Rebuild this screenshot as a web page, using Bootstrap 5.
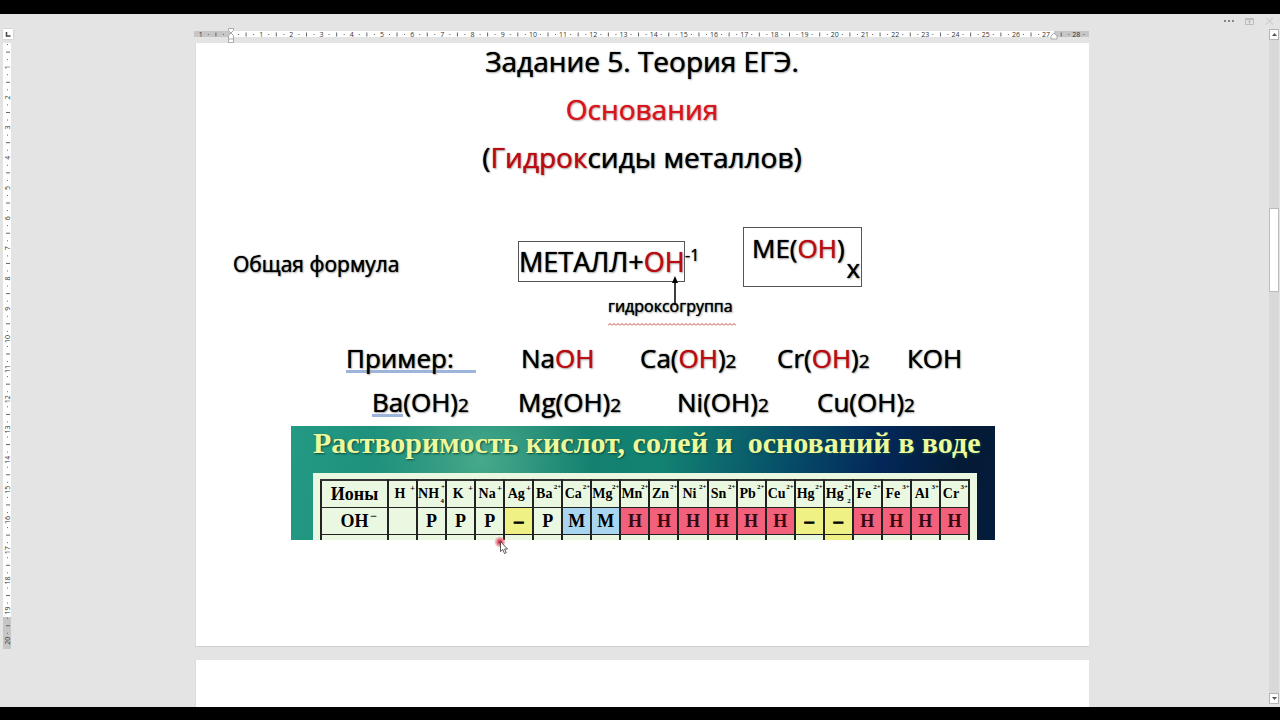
<!DOCTYPE html>
<html lang="ru">
<head>
<meta charset="utf-8">
<meta name="viewport" content="width=device-width, initial-scale=1">
<title>Задание 5. Теория ЕГЭ. Основания</title>
<link href="https://cdn.jsdelivr.net/npm/bootstrap@5.3.0/dist/css/bootstrap.min.css" rel="stylesheet">
<style>
  body { background: #000; padding: 14px 0 13px; font-family: "Open Sans", "Noto Sans", sans-serif; color: #000; }
  .word-app { background: #e4e4e4; }
  .title-tools { height: 14px; gap: 9px; padding-right: 5px; }
  .tool-btn { border: 0; background: none; padding: 0; width: 11px; height: 14px; line-height: 0; }
  .tool-btn svg, .sb-btn svg { display: block; margin: auto; }
  .left-rail { width: 15px; padding-left: 3px; }
  .tab-pick { width: 10px; height: 10px; margin: 1px 0 4px; border: 0; padding: 0; background: #fff; box-shadow: 0 0 2px #bbb; line-height: 0; }
  .doc-col { max-width: 894px; }
  .ruler-top { height: 15px; }
  .ruler-top svg, .left-rail svg { display: block; overflow: visible; }
  svg text { font: 7px "Open Sans", sans-serif; fill: #333; text-anchor: middle; }
  .sheets { overflow: clip; }
  .sheet { background: #fff; box-shadow: inset 1px 0 0 #dcdcdc, 0 1px 0 #cfcfcf; }
  .sheet-first { padding-bottom: 106px; margin-bottom: 14px; }
  .hand { text-shadow: 0 0 1px currentColor, 1px 1px 2px #aaa; font-size: 28px; line-height: 48px; }
  .hand h1, .hand h2, .hand h3 { font-size: 28px; font-weight: 400; line-height: 48px; margin: 0; }
  .hand h1 { line-height: 36px; margin-bottom: 6px; }
  .red-bright { color: #d8141c; }
  .red-dark { color: #b90c12; text-shadow: 0 0 1px currentColor, 1px 1px 2px #aaa; }
  .formula { padding: 46px 0 0 38px; grid-template-columns: 285px 225px 119px; line-height: 40px; font-size: 26px; }
  .formula-label { font-size: 21px; margin-top: 17px; }
  .frame { border: 1px solid #555; }
  .frame-metal { width: 167px; height: 41px; margin-top: 14px; line-height: 40px; font-size: 27px; }
  .frame-me { height: 60px; padding-left: 8px; line-height: 40px; }
  .sup-one { font-size: 16px; line-height: 20px; margin-top: 18px; }
  .sub-x { right: 1px; bottom: 0; line-height: 36px; }
  .hydroxo { padding-left: 413px; height: 39px; line-height: 39px; font-size: 16px; }
  .hydroxo span { display: inline-block; position: relative; }
  .arrow-up { position: absolute; left: 62px; top: -11px; }
  .wave { display: block; width: 128px; height: 3px; position: absolute; left: 0; bottom: 0; }
  .examples { font-size: 26px; line-height: 44px; }
  .examples sub { font-size: 19px; line-height: 1; vertical-align: baseline; position: static; }
  .ex-a { padding: 10px 0 0 151px; grid-template-columns: 175px 119px 137px 130px auto; }
  .ex-b { padding-left: 177px; grid-template-columns: 146px 159px 140px auto; }
  .blue-line { background: linear-gradient(#9db4dc, #9db4dc) 0 34px / 100% 3px no-repeat; display: inline-block; }
  .blue-wide { width: 130px; }
  .chart { margin: 2px 94px 0 96px; padding: 0 18px 0 22px; background: radial-gradient(circle at 190px 35px, #46a98a 0, rgba(50,160,130,0) 110px), linear-gradient(100deg, #239a84 0, #16806f 35%, #128272 52%, #064b68 70%, #03285a 82%, #041a35 94%, #041c3c 100%); }
  .chart-title { font: bold 30px/34px "Liberation Serif", serif; color: #eef99b; text-shadow: 1px 1px 2px #0a4a40; height: 47px; margin: 0; white-space: pre; }
  .chart-body { background: #eaf8e2; padding: 6px 7px 0; }
  .ions { width: 100%; table-layout: fixed; border-collapse: collapse; font: bold 18px/20px "Liberation Serif", serif; text-align: center; }
  .ions th, .ions td { border: 1px solid #222; border-width: 1px 2px 1px 1px; padding: 0; position: relative; height: 27px; font-weight: bold; text-align: center; white-space: nowrap; }
  .ions thead th { border-top: 2px solid #333; font-size: 14px; }
  .ions tbody tr:last-child td { height: 6px; border-bottom: 0; }
  .ions thead .first-col, .ions .first-col { width: 67px; font-size: 18px; border-left: 2px solid #222; }
  .ions sup { font-size: 7px; line-height: 8px; position: absolute; right: 0; top: 2px; }
  .ions .one sup { font-size: 9px; right: 1px; top: 3px; }
  .ions .first-col sup { right: 10px; top: 4px; font-size: 12px; }
  .ions sub { font-size: 7px; line-height: 8px; position: absolute; right: 1px; bottom: 2px; }
  .ions .one { padding-right: 5px; }
  .ions .two { padding-right: 7px; }
  .ions .no { background: #f2607c; color: #35080f; }
  .ions .lo { background: #a8d6f1; }
  .ions .dash { background: #f0f184; -webkit-text-stroke: 1px; }
  .pointer { position: absolute; left: 202px; bottom: -15px; }
  .scroll-col { width: 11px; padding: 1px 1px 3px 0; }
  .track { background: #d9d9d9; padding-top: 168px; }
  .thumb { height: 84px; background: #fff; border: 1px solid #bbb; }
  .sb-btn { height: 11px; padding: 0; background: #fff; border: 1px solid #b5b5b5; line-height: 0; }
</style>
</head>
<body class="vh-100 d-flex flex-column overflow-hidden">
<div class="word-app flex-fill d-flex flex-column overflow-hidden">
  <header class="title-tools d-flex justify-content-end flex-shrink-0">
    <button class="tool-btn" aria-label="Ещё"><svg width="11" height="14"><path d="M0 7h2M4 7h2M8 7h2" stroke="#666" stroke-width="1.5"/></svg></button>
    <button class="tool-btn" aria-label="Параметры ленты"><svg width="9" height="14" fill="none" stroke="#bdbdbd"><path d="M.5 4.500h8v6h-8zM.5 5.500h8M4.500 10V6.500M3 8l1.500-1.500L6 8"/></svg></button>
    <button class="tool-btn" aria-label="Закрыть"><svg width="9" height="14" stroke="#c2c2c2"><path d="M1 3.500l7 7M8 3.500l-7 7"/></svg></button>
  </header>
  <div class="d-flex flex-fill overflow-hidden">
    <aside class="left-rail flex-shrink-0">
      <button class="tab-pick d-block" aria-label="Табуляция"><svg width="10" height="10" fill="none" stroke="#444" stroke-width="1.500"><path d="M3.500 3v4h4"/></svg></button>
      <svg id="rulerV" width="8" height="607"></svg>
    </aside>
    <main class="doc-col flex-fill mx-auto d-flex flex-column">
      <div class="ruler-top flex-shrink-0"><svg id="rulerH" width="100%" height="15" viewBox="0 0 894 15"></svg></div>
      <div class="sheets flex-fill d-flex flex-column">
      <article class="sheet sheet-first flex-shrink-0">
        <div class="hand">
          <div class="text-center">
            <h1>Задание 5. Теория ЕГЭ.</h1>
            <h2 class="red-bright">Основания</h2>
            <h3>(<span class="red-dark">Гидрок</span>сиды металлов)</h3>
          </div>
          <div class="formula d-grid">
            <div class="formula-label">Общая формула</div>
            <div class="d-flex">
              <div class="frame frame-metal text-nowrap">МЕТАЛЛ+<span class="red-dark">ОН</span></div>
              <div class="sup-one">-1</div>
            </div>
            <div class="frame frame-me position-relative">МЕ(<span class="red-dark">ОН</span>)<span class="sub-x position-absolute">х</span></div>
          </div>
          <div class="hydroxo"><span>гидроксогруппа
            <svg class="arrow-up" width="10" height="30"><path d="M5 29V5" stroke="#000" stroke-width="1.500"/><path d="M5 0l3 7H2z"/></svg>
            <svg class="wave" fill="none" stroke="#c8463c"><defs><pattern id="wv" width="4" height="3" patternUnits="userSpaceOnUse"><path d="M0 2.500L2 .5l2 2"/></pattern></defs><rect width="128" height="3" fill="url(#wv)" stroke="none"/></svg>
          </span></div>
          <div class="examples">
            <div class="ex-a d-grid">
              <div><span class="blue-line blue-wide">Пример:</span></div>
              <div>Na<span class="red-dark">OH</span></div>
              <div>Ca(<span class="red-dark">OH</span>)<sub>2</sub></div>
              <div>Cr(<span class="red-dark">OH</span>)<sub>2</sub></div>
              <div>КОН</div>
            </div>
            <div class="ex-b d-grid">
              <div><span class="blue-line">Ba</span>(OH)<sub>2</sub></div>
              <div>Mg(OH)<sub>2</sub></div>
              <div>Ni(OH)<sub>2</sub></div>
              <div>Cu(OH)<sub>2</sub></div>
            </div>
          </div>
        </div>
        <section class="chart position-relative">
          <h4 class="chart-title">Растворимость кислот, солей и  оснований в воде</h4>
          <div class="chart-body">
            <table class="ions">
              <thead><tr><th class="first-col">Ионы</th><th class="one">H<sup>+</sup></th><th class="two">NH<sup>+</sup><sub>4</sub></th><th class="one">K<sup>+</sup></th><th class="one">Na<sup>+</sup></th><th class="one">Ag<sup>+</sup></th><th class="two">Ba<sup>2+</sup></th><th class="two">Ca<sup>2+</sup></th><th class="two">Mg<sup>2+</sup></th><th class="two">Mn<sup>2+</sup></th><th class="two">Zn<sup>2+</sup></th><th class="two">Ni<sup>2+</sup></th><th class="two">Sn<sup>2+</sup></th><th class="two">Pb<sup>2+</sup></th><th class="two">Cu<sup>2+</sup></th><th class="two">Hg<sup>2+</sup></th><th class="two">Hg<sup>2+</sup><sub>2</sub></th><th class="two">Fe<sup>2+</sup></th><th class="two">Fe<sup>3+</sup></th><th class="two">Al<sup>3+</sup></th><th class="two">Cr<sup>3+</sup></th></tr></thead>
              <tbody>
                <tr><th class="first-col">OH<sup>−</sup></th><td></td><td>Р</td><td>Р</td><td>Р</td><td class="dash">–</td><td>Р</td><td class="lo">М</td><td class="lo">М</td><td class="no">Н</td><td class="no">Н</td><td class="no">Н</td><td class="no">Н</td><td class="no">Н</td><td class="no">Н</td><td class="dash">–</td><td class="dash">–</td><td class="no">Н</td><td class="no">Н</td><td class="no">Н</td><td class="no">Н</td></tr>
                <tr><td class="first-col"></td><td></td><td></td><td></td><td></td><td></td><td></td><td></td><td></td><td></td><td></td><td></td><td></td><td></td><td></td><td></td><td class="dash"></td><td></td><td></td><td></td><td></td></tr>
              </tbody>
            </table>
          </div>
          <svg class="pointer" width="20" height="22"><defs><radialGradient id="spot"><stop offset=".2" stop-color="#d8283c"/><stop offset="1" stop-color="#f0607a" stop-opacity=".2"/></radialGradient></defs><circle cx="7" cy="9" r="5.500" fill="url(#spot)"/><path d="M7.500 8.500v10l2.300-2 1.700 4 1.800-.8-1.700-3.700h2.900z" fill="#fff" stroke="#333" stroke-width=".8"/></svg>
        </section>
      </article>
      <article class="sheet flex-fill"></article>
      </div>
    </main>
    <aside class="scroll-col d-flex flex-column flex-shrink-0">
      <button class="sb-btn" aria-label="Вверх"><svg width="7" height="5"><path d="M1 4l2.500-3L6 4z" fill="#555"/></svg></button>
      <div class="track flex-fill"><div class="thumb"></div></div>
      <button class="sb-btn" aria-label="Вниз"><svg width="7" height="5"><path d="M1 1l2.500 3L6 1z" fill="#555"/></svg></button>
    </aside>
  </div>
</div>
<script src="https://cdn.jsdelivr.net/npm/bootstrap@5.3.0/dist/js/bootstrap.bundle.min.js"></script>
<script>
  const CM = 30.19;
  // Quarter-centimetre marks: a number on each whole, a tick on the half, dots between.
  function marks(from, to, zero, place) {
    let out = '';
    for (let q = from; q <= to; q++) {
      if (q === 0) continue;
      const p = zero + q * CM / 4;
      out += place(p, q % 4 === 0 ? Math.abs(q / 4) : '', q % 2 === 0);
    }
    return out;
  }
  document.getElementById('rulerH').innerHTML =
    '<rect x="-1" y="3" width="895" height="6" fill="#fff"/><rect x="-1" y="3" width="37" height="6" fill="#c6c6c6"/><rect x="859" y="3" width="35" height="6" fill="#c6c6c6"/>' +
    marks(-4, 113, 36, (p, n, half) => n !== '' ? `<text x="${p}" y="9">${n}</text>` :
      `<path d="M${p} ${half ? 4.5 : 6}v${half ? 4 : 1}" stroke="#666"/>`) +
    '<path d="M33.500 .5h5v2l-5 5v7h5v-7l-5-5zM33.500 11h5" fill="#fff" stroke="#999" stroke-width=".8"/>' +
    '<path d="M856 11V8l3-3 3 3v3z" fill="#fff" stroke="#999" stroke-width=".8"/>';
  document.getElementById('rulerV').innerHTML =
    '<rect width="8" height="574" fill="#fff"/><rect y="574" width="8" height="32" fill="#c6c6c6"/>' +
    marks(1, 80, -6, (p, n, half) => n !== '' ? `<text transform="translate(7 ${p}) rotate(-90)">${n}</text>` :
      `<path d="M${half ? 3 : 4} ${p}h${half ? 4 : 1}" stroke="#666"/>`);
</script>
</body>
</html>
